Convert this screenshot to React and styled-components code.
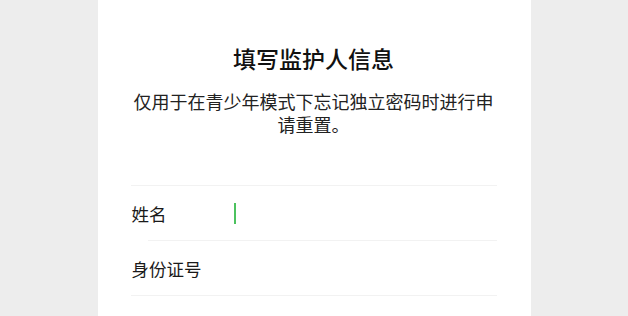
import React from 'react';
import styled, { createGlobalStyle } from 'styled-components';

const GlobalStyle = createGlobalStyle`
  html, body {
    margin: 0;
    padding: 0;
    background: #ededed;
    font-family: "Noto Sans CJK SC", "Noto Sans", sans-serif;
  }
`;

const Page = styled.div`
  min-height: 316px;
  display: flex;
  justify-content: center;
`;

const Panel = styled.div`
  width: 433px;
  min-height: 316px;
  background: #fff;
  padding: 42px 34px 0 33px;
  box-sizing: border-box;
`;

const Title = styled.h1`
  margin: 0;
  font-size: 23px;
  line-height: 32px;
  font-weight: 500;
  color: #111;
  text-align: center;
`;

const Desc = styled.p`
  margin: 16px 0 0;
  font-size: 18px;
  line-height: 23px;
  color: #222;
  text-align: center;
`;

const Form = styled.div`
  margin-top: 49px;
  border-top: 1px solid #f2f2f2;
`;

const Row = styled.div`
  position: relative;
  height: 55px;
  display: flex;
  align-items: center;
  &::after {
    content: '';
    position: absolute;
    bottom: 0;
    right: 0;
    left: ${p => (p.$inset ? '17px' : '0')};
    border-bottom: 1px solid #f2f2f2;
  }
`;

const Label = styled.span`
  width: 103px;
  flex-shrink: 0;
  padding-left: 1px;
  box-sizing: border-box;
  font-size: 17.5px;
  color: #1a1a1a;
`;

const Field = styled.div`
  flex: 1;
  height: 22px;
  display: flex;
  align-items: center;
`;

const Caret = styled.span`
  width: 2px;
  height: 21px;
  background: #4cc25f;
`;

export default function App() {
  return (
    <>
      <GlobalStyle />
      <Page>
        <Panel>
          <Title>填写监护人信息</Title>
          <Desc>仅用于在青少年模式下忘记独立密码时进行申请重置。</Desc>
          <Form>
            <Row $inset>
              <Label>姓名</Label>
              <Field>
                <Caret />
              </Field>
            </Row>
            <Row>
              <Label>身份证号</Label>
              <Field />
            </Row>
          </Form>
        </Panel>
      </Page>
    </>
  );
}
